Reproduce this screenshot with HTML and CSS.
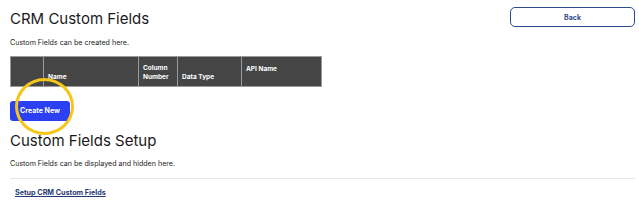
FILE: index.html
```html
<!DOCTYPE html>
<html>
<head>
<meta charset="utf-8">
<link rel="stylesheet" href="styles.css">
</head>
<body>
<div class="page">
  <div class="head">
    <h1 class="title">CRM Custom Fields</h1>
    <button class="back">Back</button>
  </div>
  <p class="desc">Custom Fields can be created here.</p>
  <table class="grid">
    <thead>
      <tr>
        <th class="c0"></th>
        <th class="c1 bottom">Name</th>
        <th class="c2 bottom">Column<br>Number</th>
        <th class="c3 bottom">Data Type</th>
        <th class="c4">API Name</th>
      </tr>
    </thead>
  </table>
  <div class="create-wrap">
    <button class="create">Create New</button>
    <span class="ring"></span>
  </div>
  <h2 class="title title2">Custom Fields Setup</h2>
  <p class="desc desc2">Custom Fields can be displayed and hidden here.</p>
  <hr class="rule">
  <a class="link" href="#">Setup CRM Custom Fields</a>
</div>
</body>
</html>
```
FILE: styles.css
```css
html, body {
  margin: 0;
  padding: 0;
  background: #fff;
}
.page {
  font-family: Inter, "Liberation Sans", sans-serif;
  color: #1a1a1a;
  padding: 7px 4px 0 10px;
}
.head {
  display: flex;
  justify-content: space-between;
  align-items: flex-start;
}
.title {
  margin: 2px 0 0;
  font-size: 15px;
  font-weight: 400;
  line-height: 20px;
}
.back {
  width: 125px;
  height: 20px;
  border: 1.5px solid #2f4d8c;
  border-radius: 5px;
  background: #fff;
  color: #2f4d8c;
  font-family: inherit;
  font-weight: 700;
  font-size: 7px;
  padding: 0;
}
.desc {
  margin: 9px 0 0;
  font-size: 7.1px;
  line-height: 10px;
  color: #222;
}
.grid {
  margin-top: 8px;
  border-collapse: collapse;
  width: 312px;
  height: 31px;
  background: #454545;
}
.grid th {
  border: 1px solid #9a9a9a;
  color: #fff;
  font-size: 6.5px;
  font-weight: 700;
  text-align: left;
  padding: 0 4px 4px;
  line-height: 9px;
  vertical-align: middle;
}
.grid th.bottom {
  vertical-align: bottom;
}
.c0 { width: 24px; }
.c1 { width: 86px; }
.c2 { width: 30px; }
.c3 { width: 55px; }
.create-wrap {
  position: relative;
  margin-top: 10px;
  height: 20px;
}
.create {
  width: 60px;
  height: 20px;
  background: #2a40f2;
  color: #fff;
  border: none;
  border-radius: 3px;
  font-family: inherit;
  font-weight: 700;
  font-size: 7px;
  padding: 0;
}
.ring {
  position: absolute;
  left: 5px;
  top: -19px;
  width: 53px;
  height: 51px;
  border: 3px solid #f5c518;
  border-radius: 50%;
}
.title2 {
  margin-top: 14px;
}
.desc2 {
  margin-top: 8px;
}
.rule {
  margin: 9px 0 0;
  border: none;
  border-top: 1px solid #e6e6e6;
  height: 0;
}
.link {
  display: inline-block;
  margin: 3px 0 0 5px;
  font-size: 7.2px;
  font-weight: 700;
  color: #1f3b73;
  text-decoration: underline;
}
```
